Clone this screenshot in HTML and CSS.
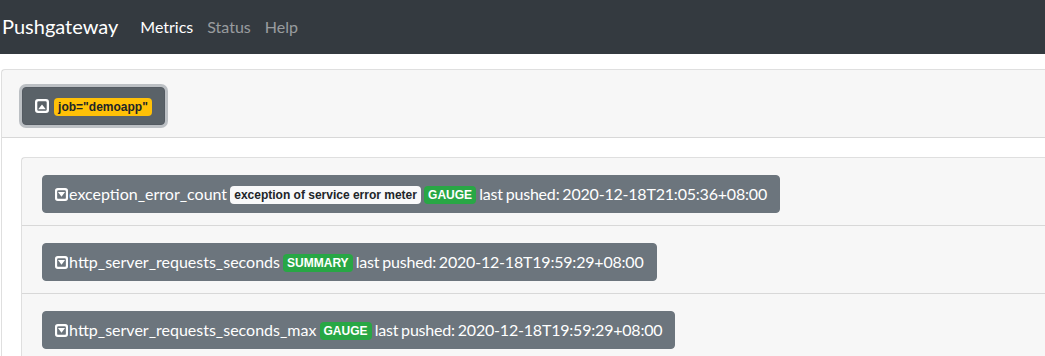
FILE: index.html
```html
<!DOCTYPE html>
<html lang="en">
<head>
<meta charset="utf-8">
<title>Pushgateway</title>
<link rel="stylesheet" href="styles.css">
</head>
<body>
<nav class="navbar">
  <a class="brand" href="#">Pushgateway</a>
  <ul class="nav">
    <li><a class="nav-link active" href="#">Metrics</a></li>
    <li><a class="nav-link" href="#">Status</a></li>
    <li><a class="nav-link" href="#">Help</a></li>
  </ul>
</nav>
<div class="page">
  <div class="card outer">
    <div class="card-header">
      <button class="btn btn-focus"><svg class="toggle toggle-lg" viewBox="0 0 14 14" aria-hidden="true"><path fill-rule="evenodd" fill="currentColor" d="M3 0h8a3 3 0 0 1 3 3v8a3 3 0 0 1-3 3H3a3 3 0 0 1-3-3V3a3 3 0 0 1 3-3zM3.6 2.3a1.3 1.3 0 0 0-1.3 1.3v6.8a1.3 1.3 0 0 0 1.3 1.3h6.8a1.3 1.3 0 0 0 1.3-1.3V3.6a1.3 1.3 0 0 0-1.3-1.3zM3.2 10.2L7 5.4l3.8 4.8z"/></svg> <span class="badge badge-warning">job="demoapp"</span></button>
    </div>
    <div class="card-body">
      <div class="card inner">
        <div class="card-header">
          <button class="btn"><svg class="toggle" viewBox="0 0 14 14" aria-hidden="true"><path fill-rule="evenodd" fill="currentColor" d="M3 0h8a3 3 0 0 1 3 3v8a3 3 0 0 1-3 3H3a3 3 0 0 1-3-3V3a3 3 0 0 1 3-3zM3.6 2.3a1.3 1.3 0 0 0-1.3 1.3v6.8a1.3 1.3 0 0 0 1.3 1.3h6.8a1.3 1.3 0 0 0 1.3-1.3V3.6a1.3 1.3 0 0 0-1.3-1.3zM3.2 4.4h7.6L7 9.4z"/></svg> exception_error_count <span class="badge badge-light">exception of service error meter</span> <span class="badge badge-success">GAUGE</span> <span class="pushed">last pushed: 2020-12-18T21:05:36+08:00</span></button>
        </div>
        <div class="card-header">
          <button class="btn"><svg class="toggle" viewBox="0 0 14 14" aria-hidden="true"><path fill-rule="evenodd" fill="currentColor" d="M3 0h8a3 3 0 0 1 3 3v8a3 3 0 0 1-3 3H3a3 3 0 0 1-3-3V3a3 3 0 0 1 3-3zM3.6 2.3a1.3 1.3 0 0 0-1.3 1.3v6.8a1.3 1.3 0 0 0 1.3 1.3h6.8a1.3 1.3 0 0 0 1.3-1.3V3.6a1.3 1.3 0 0 0-1.3-1.3zM3.2 4.4h7.6L7 9.4z"/></svg> http_server_requests_seconds <span class="badge badge-success">SUMMARY</span> <span class="pushed">last pushed: 2020-12-18T19:59:29+08:00</span></button>
        </div>
        <div class="card-header">
          <button class="btn"><svg class="toggle" viewBox="0 0 14 14" aria-hidden="true"><path fill-rule="evenodd" fill="currentColor" d="M3 0h8a3 3 0 0 1 3 3v8a3 3 0 0 1-3 3H3a3 3 0 0 1-3-3V3a3 3 0 0 1 3-3zM3.6 2.3a1.3 1.3 0 0 0-1.3 1.3v6.8a1.3 1.3 0 0 0 1.3 1.3h6.8a1.3 1.3 0 0 0 1.3-1.3V3.6a1.3 1.3 0 0 0-1.3-1.3zM3.2 4.4h7.6L7 9.4z"/></svg> http_server_requests_seconds_max <span class="badge badge-success">GAUGE</span> <span class="pushed">last pushed: 2020-12-18T19:59:29+08:00</span></button>
        </div>
      </div>
    </div>
  </div>
</div>
</body>
</html>
```

FILE: styles.css
```css
html, body {
  margin: 0;
  padding: 0;
  overflow: hidden;
  background: #fff;
}

body {
  font-family: "Segoe UI", Lato, "Liberation Sans", sans-serif;
  font-size: 16px;
  line-height: 1.5;
  color: #212529;
}

.navbar {
  display: flex;
  align-items: center;
  height: 54px;
  padding: 0 0 0 2px;
  background: #343a40;
}

.brand {
  font-size: 20px;
  color: #fff;
  text-decoration: none;
  margin-right: 15px;
  line-height: 30px;
  padding-bottom: 2px;
}

.nav {
  display: flex;
  list-style: none;
  margin: 0;
  padding: 0;
}

.nav-link {
  display: block;
  padding: 0 7px;
  color: rgba(255, 255, 255, 0.5);
  text-decoration: none;
}

.nav-link.active {
  color: #fff;
}

.page {
  padding: 15px 0 0 1px;
}

.card {
  border: 1px solid rgba(0, 0, 0, 0.125);
  border-radius: 4px;
  background: #fff;
}

.card.outer {
  width: 1100px;
}

.card-header {
  background: rgba(0, 0, 0, 0.03);
  border-bottom: 1px solid rgba(0, 0, 0, 0.125);
  padding: 17px 20px 12px;
  line-height: 0;
}

.card-body {
  padding: 19px 0 0 19px;
}

.btn {
  display: inline-block;
  font-family: inherit;
  font-size: 16px;
  line-height: 24px;
  height: 38px;
  padding: 6px 12px;
  color: #fff;
  background: #6c757d;
  border: 1px solid #6c757d;
  border-radius: 4px;
  white-space: nowrap;
  word-spacing: -1px;
  cursor: pointer;
}

.btn-focus {
  background: #5a6268;
  border-color: #545b62;
  box-shadow: 0 0 0 3px rgba(130, 138, 145, 0.5);
}

.pushed {
  letter-spacing: -0.2px;
}

.toggle {
  width: 13px;
  height: 13px;
  vertical-align: -1px;
  margin-right: -2px;
  color: #fff;
}

.toggle-lg {
  width: 14px;
  height: 14px;
  margin-right: 2px;
}

.badge {
  display: inline-block;
  padding: 3px 4px;
  font-family: "Liberation Sans", Arial, sans-serif;
  font-size: 12px;
  font-weight: 700;
  line-height: 1;
  border-radius: 4px;
  vertical-align: 1px;
  word-spacing: 0;
}

.badge-warning {
  background: #ffc107;
  color: #212529;
}

.badge-light {
  background: #f8f9fa;
  color: #212529;
}

.badge-success {
  background: #28a745;
  color: #fff;
}
```
